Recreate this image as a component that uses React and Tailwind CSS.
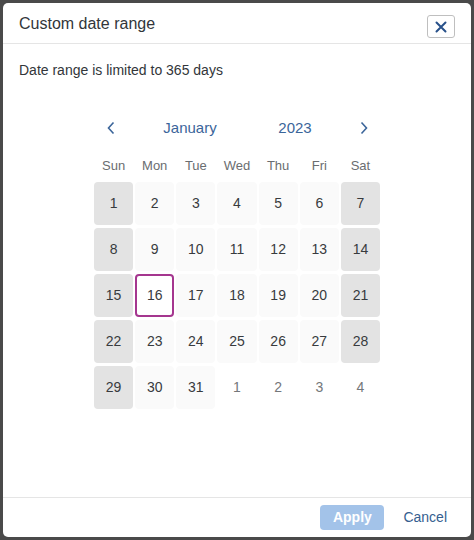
import React from 'react'

const WEEKDAYS = ['Sun', 'Mon', 'Tue', 'Wed', 'Thu', 'Fri', 'Sat']

// January 2023 starts on a Sunday; trailing days belong to February
const DAYS = [
  ...Array.from({ length: 31 }, (_, i) => ({ n: i + 1, cur: true })),
  ...[1, 2, 3, 4].map(n => ({ n, cur: false })),
]

function DayCell({ day, col }) {
  const weekend = col === 0 || col === 6
  const selected = day.cur && day.n === 16

  if (!day.cur) {
    return (
      <div className="h-[43px] flex items-center justify-center text-[14px] text-[#74777a]">
        {day.n}
      </div>
    )
  }

  return (
    <div
      className={`h-[43px] flex items-center justify-center rounded-[4px] text-[14px] text-[#383b3e] ${
        selected
          ? 'bg-white border-2 border-[#a5368f]'
          : weekend
          ? 'bg-[#e3e3e3]'
          : 'bg-[#fafafa]'
      }`}
    >
      {day.n}
    </div>
  )
}

export default function App() {
  return (
    <div
      className="w-[474px] h-[540px] bg-[#4a4a4a] p-[3px]"
      style={{ fontFamily: '"Liberation Sans", Arial, sans-serif' }}
    >
      <div className="h-full bg-white rounded-[5px] flex flex-col">
        {/* Header */}
        <div className="h-[41px] flex items-center justify-between pl-[16px] pr-[16px] border-b border-[#e5e5e5] shrink-0">
          <h1 className="text-[16px] text-[#32363a] mt-[1px]">Custom date range</h1>
          <button className="w-[28px] h-[23px] mt-[7px] rounded-[3px] border border-[#bfbfbf] flex items-center justify-center">
            <svg width="12" height="12" viewBox="0 0 12 12">
              <path d="M1.5 1.5 L10.5 10.5 M10.5 1.5 L1.5 10.5" stroke="#28518a" strokeWidth="2" strokeLinecap="round" />
            </svg>
          </button>
        </div>

        {/* Body */}
        <div className="flex-1 px-[16px]">
          <p className="text-[14px] text-[#32363a] mt-[16px] leading-[20px]">Date range is limited to 365 days</p>

          <div className="w-[286px] ml-[75px] mt-[36px]">
            {/* Month / year nav */}
            <div className="h-[24px] flex items-center text-[15px] text-[#3b659a]">
              <span className="w-[34px] shrink-0 flex justify-center">
                <svg width="10" height="14" viewBox="0 0 10 14">
                  <path d="M7.5 1.5 L2.5 7 L7.5 12.5" fill="none" stroke="#3b659a" strokeWidth="1.6" />
                </svg>
              </span>
              <span className="w-[124px] shrink-0 text-center">January</span>
              <span className="w-[86px] shrink-0 text-center">2023</span>
              <span className="w-[52px] shrink-0 flex justify-center">
                <svg width="10" height="14" viewBox="0 0 10 14">
                  <path d="M2.5 1.5 L7.5 7 L2.5 12.5" fill="none" stroke="#3b659a" strokeWidth="1.6" />
                </svg>
              </span>
            </div>

            {/* Weekday header */}
            <div className="grid grid-cols-7 gap-x-[2px] mt-[10px] h-[31px] items-center">
              {WEEKDAYS.map(w => (
                <div key={w} className="text-center text-[13px] text-[#6a6d70]">{w}</div>
              ))}
            </div>

            {/* Days */}
            <div className="grid grid-cols-7 gap-x-[2px] gap-y-[3px] mt-[1px]">
              {DAYS.map((d, i) => (
                <DayCell key={i} day={d} col={i % 7} />
              ))}
            </div>
          </div>
        </div>

        {/* Footer */}
        <div className="h-[40px] border-t border-[#e5e5e5] flex items-center justify-end gap-[19px] pr-[24px] shrink-0">
          <button className="w-[64px] h-[25px] rounded-[4px] bg-[#a3c3e9] text-white text-[14px] font-bold">Apply</button>
          <button className="text-[14px] text-[#35608f]">Cancel</button>
        </div>
      </div>
    </div>
  )
}
